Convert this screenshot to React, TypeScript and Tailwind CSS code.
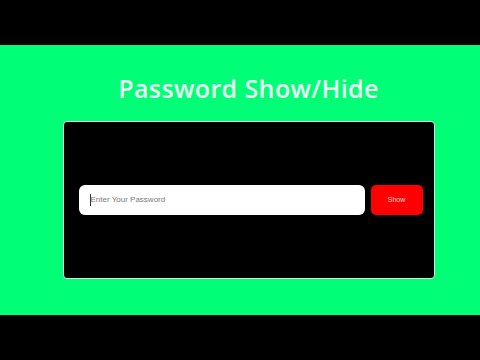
export default function App() {
  return (
    <div className="flex h-[360px] w-[480px] flex-col bg-black">
      <div className="h-[45px]" />
      <div className="flex h-[270px] flex-col items-center bg-[#00ff77] pl-[17px]">
        <h1
          className="mt-[28px] text-[25px] font-semibold leading-[30px] tracking-[0.4px] text-[#eafff2]"
          style={{ fontFamily: '"Open Sans", "Noto Sans", sans-serif' }}
        >
          Password Show/Hide
        </h1>
        <div className="mt-[18px] flex h-[158px] w-[372px] items-center gap-[6px] rounded-[4px] border border-[#cfeede] bg-black pl-[15px] pr-[11px]">
          <div className="flex h-[30px] flex-1 items-center rounded-[6px] bg-white pl-[11px]">
            <span className="h-[12px] w-px bg-[#333]" />
            <span
              className="text-[8px] text-[#7a7a7a]"
              style={{ fontFamily: '"Liberation Sans", Arial, sans-serif' }}
            >
              Enter Your Password
            </span>
          </div>
          <button
            className="flex h-[30px] w-[52px] items-center justify-center rounded-[5px] bg-[#ff0000] text-[7px] text-[#ffd8d8]"
            style={{ fontFamily: '"Liberation Sans", Arial, sans-serif' }}
          >
            Show
          </button>
        </div>
      </div>
    </div>
  );
}
